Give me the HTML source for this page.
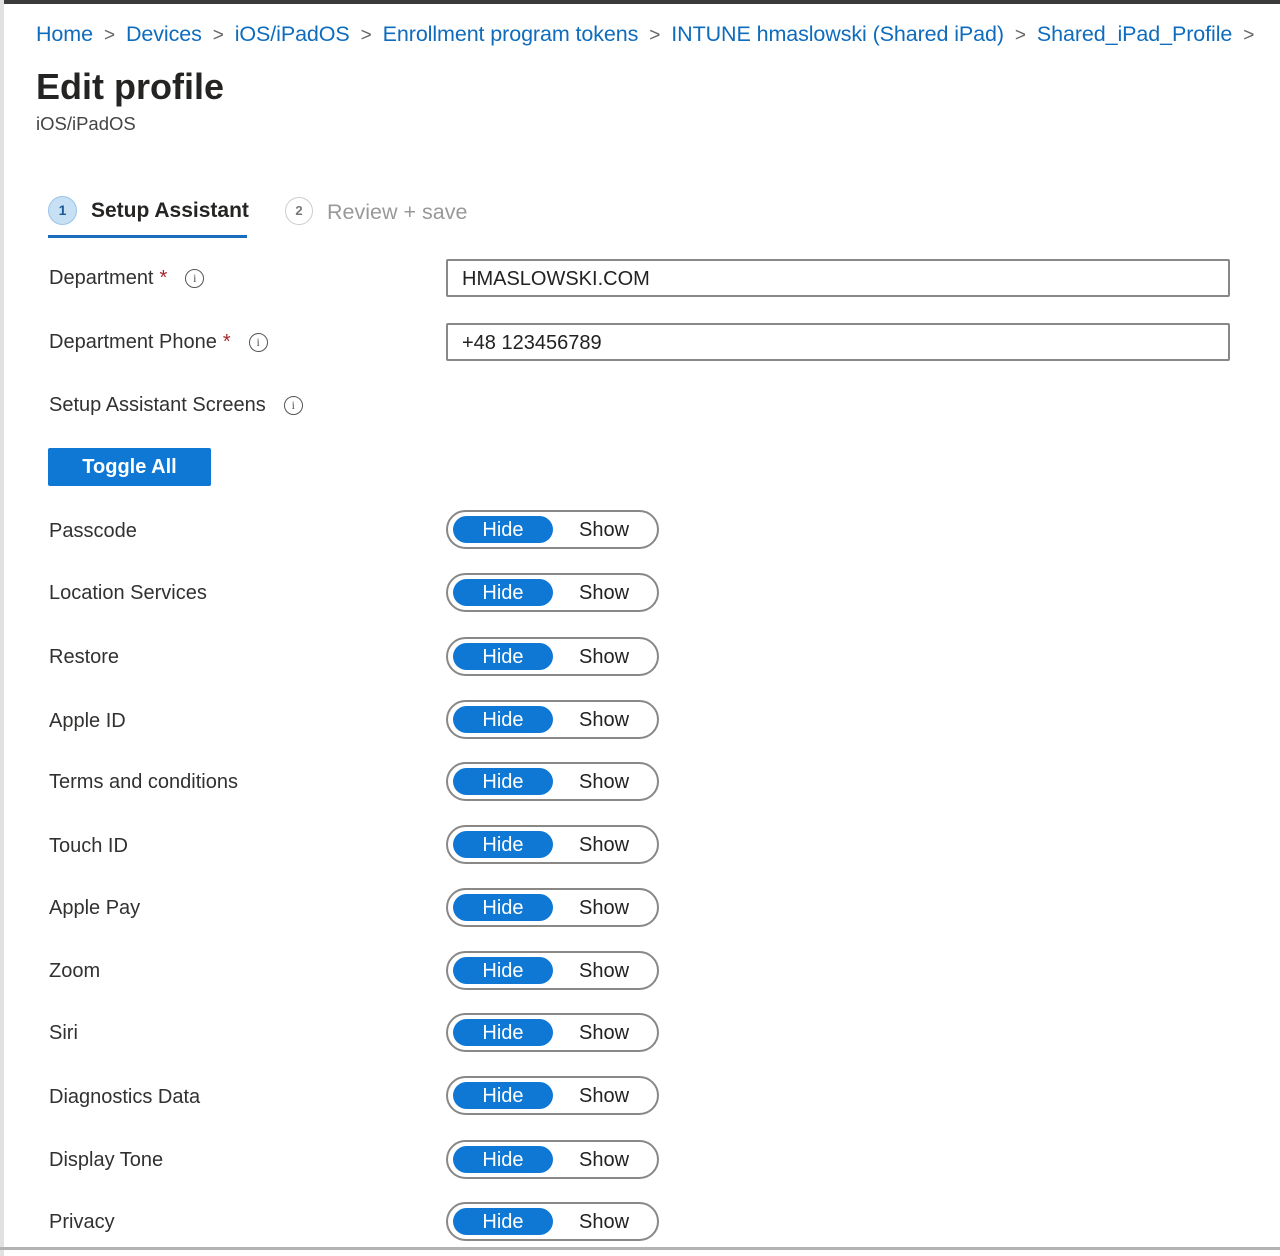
<!DOCTYPE html>
<html><head><meta charset="utf-8"><style>
*{margin:0;padding:0;box-sizing:border-box}
body{width:1280px;height:1256px;background:#fff;font-family:"Liberation Sans",sans-serif;color:#323130;position:relative;overflow:hidden}
.a{position:absolute;white-space:nowrap}
.bc{top:22px;left:36px;font-size:21.5px;color:#0f6cbd;letter-spacing:-0.1px}
.bc span.s{color:#666;margin:0 11px;font-size:19px}
.lbl{left:49px;font-size:20px;color:#323130}
.info{display:inline-block;width:19px;height:19px;border:1.5px solid #555;border-radius:50%;font-size:12px;text-align:center;line-height:16px;color:#555;vertical-align:2px;margin-left:18px;font-family:"Liberation Serif",serif}
.star{color:#a4262c;margin-left:6px}
.inp{left:446px;width:784px;height:38px;border:2px solid #8a8886;border-radius:2px;font-size:20px;padding:7px 14px;color:#222}
.tg{left:446px;width:213px;height:39px;border:2px solid #8a8886;border-radius:20px}
.tg .h{position:absolute;left:5px;top:4px;width:100px;height:27px;background:#0f78d4;border-radius:14px;color:#fff;font-size:20px;text-align:center;line-height:29px}
.tg .sh{position:absolute;left:131px;top:4px;font-size:20px;line-height:29px;color:#222}
</style></head><body>
<div class="a" style="left:0;top:0;width:1280px;height:4px;background:#3b3b3b"></div>
<div class="a" style="left:0;top:0;width:4px;height:1256px;background:#e1e1e1"></div>
<div class="a" style="left:0;top:1247px;width:1280px;height:3px;background:#b3b3b3"></div>
<div class="a bc">Home<span class="s">&gt;</span>Devices<span class="s">&gt;</span>iOS/iPadOS<span class="s">&gt;</span>Enrollment program tokens<span class="s">&gt;</span>INTUNE hmaslowski (Shared iPad)<span class="s">&gt;</span>Shared_iPad_Profile<span class="s">&gt;</span></div>
<div class="a" style="left:36px;top:66px;font-size:36px;font-weight:bold;color:#252423">Edit profile</div>
<div class="a" style="left:36px;top:113px;font-size:18.5px;color:#444">iOS/iPadOS</div>
<div class="a" style="left:48px;top:196px;width:29px;height:29px;border-radius:50%;background:#c7e0f4;border:1px solid #9ac5ea;font-size:14px;text-align:center;line-height:27px;font-weight:bold;color:#1a5a96">1</div>
<div class="a" style="left:91px;top:199px;font-size:21px;font-weight:bold;color:#252423">Setup Assistant</div>
<div class="a" style="left:48px;top:235px;width:199px;height:3px;background:#1a6dbd"></div>
<div class="a" style="left:285px;top:197px;width:28px;height:28px;border-radius:50%;border:1.5px solid #ccc;font-size:13px;text-align:center;line-height:25px;font-weight:bold;color:#777">2</div>
<div class="a" style="left:327px;top:200px;font-size:21.5px;color:#999">Review + save</div>
<div class="a lbl" style="top:267px">Department<span class="star">*</span><span class="info">i</span></div>
<div class="a inp" style="top:259px">HMASLOWSKI.COM</div>
<div class="a lbl" style="top:331px">Department Phone<span class="star">*</span><span class="info">i</span></div>
<div class="a inp" style="top:323px">+48 123456789</div>
<div class="a lbl" style="top:394px">Setup Assistant Screens<span class="info">i</span></div>
<div class="a" style="left:48px;top:448px;width:163px;height:38px;background:#0f78d4;border-radius:2px;color:#fff;font-weight:bold;font-size:20px;text-align:center;line-height:38px">Toggle All</div>
<div class="a lbl" style="top:520px">Passcode</div><div class="a tg" style="top:510px"><div class="h">Hide</div><div class="sh">Show</div></div>
<div class="a lbl" style="top:582px">Location Services</div><div class="a tg" style="top:573px"><div class="h">Hide</div><div class="sh">Show</div></div>
<div class="a lbl" style="top:646px">Restore</div><div class="a tg" style="top:637px"><div class="h">Hide</div><div class="sh">Show</div></div>
<div class="a lbl" style="top:710px">Apple ID</div><div class="a tg" style="top:700px"><div class="h">Hide</div><div class="sh">Show</div></div>
<div class="a lbl" style="top:771px">Terms and conditions</div><div class="a tg" style="top:762px"><div class="h">Hide</div><div class="sh">Show</div></div>
<div class="a lbl" style="top:835px">Touch ID</div><div class="a tg" style="top:825px"><div class="h">Hide</div><div class="sh">Show</div></div>
<div class="a lbl" style="top:897px">Apple Pay</div><div class="a tg" style="top:888px"><div class="h">Hide</div><div class="sh">Show</div></div>
<div class="a lbl" style="top:960px">Zoom</div><div class="a tg" style="top:951px"><div class="h">Hide</div><div class="sh">Show</div></div>
<div class="a lbl" style="top:1022px">Siri</div><div class="a tg" style="top:1013px"><div class="h">Hide</div><div class="sh">Show</div></div>
<div class="a lbl" style="top:1086px">Diagnostics Data</div><div class="a tg" style="top:1076px"><div class="h">Hide</div><div class="sh">Show</div></div>
<div class="a lbl" style="top:1149px">Display Tone</div><div class="a tg" style="top:1140px"><div class="h">Hide</div><div class="sh">Show</div></div>
<div class="a lbl" style="top:1211px">Privacy</div><div class="a tg" style="top:1202px"><div class="h">Hide</div><div class="sh">Show</div></div>
</body></html>
